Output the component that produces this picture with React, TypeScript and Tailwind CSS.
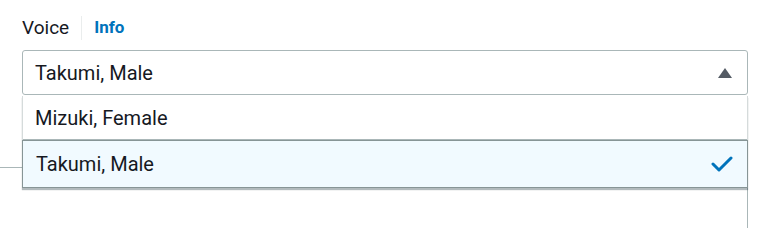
import React from "react";

// Voice select, open state
const options = [
  { label: "Mizuki, Female", selected: false },
  { label: "Takumi, Male", selected: true },
];

export default function App() {
  return (
    <div
      className="relative h-[228px] w-[768px] overflow-hidden bg-white text-[#16191f]"
      style={{ fontFamily: "Roboto, 'Liberation Sans', Arial, sans-serif" }}
    >
      <div className="pl-[22px] pt-[14px]">
        {/* Label */}
        <div className="flex h-[28px] items-center">
          <span className="text-[19px] leading-[28px]">Voice</span>
          <span className="mx-[12px] h-[24px] w-px bg-[#eaeded]" />
          <span className="text-[17px] font-bold text-[#0073bb]">Info</span>
        </div>

        {/* Select trigger */}
        <div className="relative mt-[8px] w-[726px]">
          <div className="flex h-[45px] items-center justify-between rounded-[3px] border border-[#aab7b8] bg-white pl-[12px] pr-[14px]">
            <span className="text-[20px]">Takumi, Male</span>
            <svg width="16" height="12" viewBox="0 0 16 12">
              <polygon points="8,1 15,11 1,11" fill="#545b64" />
            </svg>
          </div>

          {/* Dropdown */}
          <ul className="absolute left-0 top-[46px] z-10 w-[726px] border-x border-[#d5dbdb] bg-white shadow-[0_2px_1px_rgba(0,28,36,0.3)]">
            {options.map((o) => (
              <li
                key={o.label}
                className={
                  o.selected
                    ? "-mx-px flex h-[48px] items-center justify-between border border-[#879596] bg-[#f1faff] pl-[13px] pr-[14px]"
                    : "flex h-[44px] items-center border-b border-[#aab7b8] pl-[12px]"
                }
              >
                <span className="text-[20px]">{o.label}</span>
                {o.selected && (
                  <svg width="22" height="16" viewBox="0 0 22 16">
                    <path
                      d="M2 8 L8 14 L20 2"
                      fill="none"
                      stroke="#0073bb"
                      strokeWidth="3"
                      strokeLinecap="round"
                      strokeLinejoin="round"
                    />
                  </svg>
                )}
              </li>
            ))}
          </ul>
        </div>
      </div>

      {/* Panel behind the dropdown */}
      <div className="ml-[-10px] mt-[72px] h-[80px] w-[758px] border-r border-t border-[#aab7b8]" />
    </div>
  );
}
